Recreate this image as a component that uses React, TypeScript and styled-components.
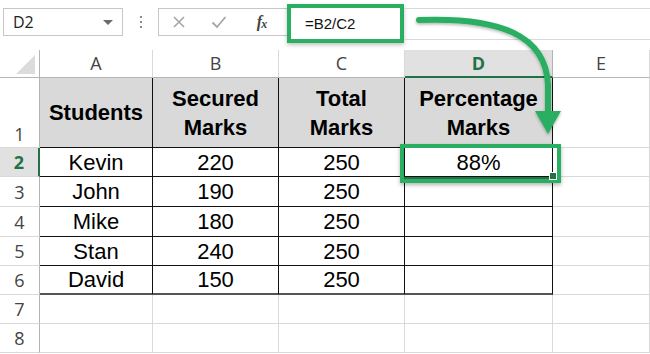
import React from "react";
import styled, { createGlobalStyle } from "styled-components";

const GREEN = "#2aae62";
const DARK_GREEN = "#217346";
const GRID = "#d9d9d9";
const HEAD_LINE = "#b4b4b4";

const GlobalStyle = createGlobalStyle`
  html, body {
    margin: 0;
    padding: 0;
    background: #ffffff;
  }
  #root {
    width: 650px;
    height: 354px;
    overflow: hidden;
  }
`;

const Page = styled.div`
  position: relative;
  width: 650px;
  height: 354px;
  background: #fff;
  font-family: "Liberation Sans", Arial, sans-serif;
`;

/* ---------- formula bar ---------- */

const Toolbar = styled.div`
  display: flex;
  align-items: flex-start;
  height: 50px;
  padding-left: 3px;
  box-sizing: border-box;
`;

const NameBox = styled.div`
  display: flex;
  align-items: center;
  justify-content: space-between;
  width: 120px;
  height: 28px;
  margin-top: 8px;
  padding: 0 9px 0 9px;
  box-sizing: border-box;
  border: 1px solid #c6c6c6;
  font-family: "Open Sans", "Noto Sans", sans-serif;
  font-size: 16px;
  color: #222;
`;

const Caret = styled.span`
  width: 0;
  height: 0;
  border-left: 5px solid transparent;
  border-right: 5px solid transparent;
  border-top: 5px solid #6a6a6a;
`;

const Dots = styled.div`
  display: flex;
  flex-direction: column;
  align-items: center;
  justify-content: center;
  gap: 3px;
  width: 35px;
  height: 28px;
  margin-top: 8px;

  span {
    width: 2px;
    height: 2px;
    background: #8a8a8a;
  }
`;

const Buttons = styled.div`
  display: flex;
  align-items: center;
  width: 129px;
  height: 28px;
  margin-top: 8px;
  box-sizing: border-box;
  border: 1px solid #c6c6c6;
  border-right: none;
`;

const ToolButton = styled.div`
  display: flex;
  align-items: center;
  justify-content: center;
  width: 40px;
  height: 100%;
`;

const Fx = styled.span`
  font-family: "Liberation Serif", "Times New Roman", serif;
  font-style: italic;
  font-weight: bold;
  font-size: 16px;
  color: #444;
  margin-left: 6px;

  sub {
    font-size: 12px;
    vertical-align: -1px;
    margin-left: -1px;
  }
`;

const FormulaCell = styled.div`
  display: flex;
  align-items: center;
  width: 117px;
  height: 39px;
  margin-top: 4px;
  padding-left: 14px;
  box-sizing: border-box;
  border: 4px solid ${GREEN};
  box-shadow: 0 2px 4px rgba(0, 0, 0, 0.25);
  font-size: 15px;
  color: #111;
  background: #fff;
`;

const FormulaRest = styled.div`
  flex: 1;
  height: 30px;
  margin-top: 8px;
  border-top: 1px solid ${GRID};
  border-bottom: 1px solid ${GRID};
`;

/* ---------- sheet ---------- */

const Sheet = styled.div`
  display: grid;
  grid-template-columns: 40px 113px 126px 126px 148px 1fr;
  grid-template-rows: 28px 70px 29px 30px 30px 29px 29px 29px 29px;
`;

type CellProps = {
  $bg?: string;
  $right?: string;
  $bottom?: string;
  $bottomWidth?: number;
  $rightWidth?: number;
  $bold?: boolean;
  $raised?: boolean;
  $valign?: "center" | "flex-end";
};

const Cell = styled.div<CellProps>`
  position: relative;
  z-index: ${(p) => (p.$raised ? 2 : "auto")};
  display: flex;
  align-items: ${(p) => p.$valign || "center"};
  justify-content: center;
  box-sizing: border-box;
  background: ${(p) => p.$bg || "#fff"};
  border-right: ${(p) => p.$rightWidth || 1}px solid ${(p) => p.$right || GRID};
  border-bottom: ${(p) => p.$bottomWidth || 1}px solid ${(p) => p.$bottom || GRID};
  font-size: 22px;
  font-weight: ${(p) => (p.$bold ? 700 : 400)};
  color: #000;
  text-align: center;
  line-height: 29px;
`;

const HeadLabel = styled.span<{ $active?: boolean }>`
  font-family: "Open Sans", "Noto Sans", sans-serif;
  font-size: 18px;
  font-weight: ${(p) => (p.$active ? 700 : 400)};
  color: ${(p) => (p.$active ? DARK_GREEN : "#444")};
`;

const RowLabel = styled(HeadLabel)`
  line-height: 26px;
`;

const Corner = styled.div`
  width: 0;
  height: 0;
  border-left: 19px solid transparent;
  border-bottom: 19px solid #dcdcdc;
  position: absolute;
  right: 4px;
  bottom: 3px;
`;

const Selection = styled.div`
  position: absolute;
  left: -5px;
  top: -4px;
  right: -9px;
  bottom: -7px;
  border: 4px solid ${GREEN};
  box-shadow: 0 2px 4px rgba(0, 0, 0, 0.3);
  pointer-events: none;

  &::before {
    content: "";
    position: absolute;
    left: 0;
    right: 3px;
    bottom: 0;
    height: 2px;
    background: ${DARK_GREEN};
  }

  &::after {
    content: "";
    position: absolute;
    right: 0;
    bottom: -1px;
    width: 6px;
    height: 6px;
    background: ${DARK_GREEN};
    border: 1px solid #fff;
  }
`;

const Arrow = styled.svg`
  position: absolute;
  left: 0;
  top: 0;
  z-index: 3;
  pointer-events: none;
`;

const columns = ["A", "B", "C", "D", "E"];

const rows: string[][] = [
  ["Kevin", "220", "250", "88%"],
  ["John", "190", "250", ""],
  ["Mike", "180", "250", ""],
  ["Stan", "240", "250", ""],
  ["David", "150", "250", ""],
];

const headers = ["Students", "Secured\nMarks", "Total\nMarks", "Percentage\nMarks"];

const Lines = ({ text }: { text: string }) => (
  <span>
    {text.split("\n").map((t, i) => (
      <React.Fragment key={i}>
        {i > 0 && <br />}
        {t}
      </React.Fragment>
    ))}
  </span>
);

export default function App() {
  const cells: React.ReactNode[] = [];

  // column header row
  cells.push(
    <Cell key="corner" $right={HEAD_LINE} $bottom={HEAD_LINE}>
      <Corner />
    </Cell>
  );
  columns.forEach((c) => {
    const active = c === "D";
    cells.push(
      <Cell
        key={`h-${c}`}
        $bg={active ? "#e1e1e1" : "#fff"}
        $right={active ? HEAD_LINE : GRID}
        $bottom={active ? DARK_GREEN : HEAD_LINE}
        $bottomWidth={active ? 2 : 1}
      >
        <HeadLabel $active={active}>{c}</HeadLabel>
      </Cell>
    );
  });

  // row 1 (table headings)
  cells.push(
    <Cell key="r1" $right={HEAD_LINE} $valign="flex-end">
      <RowLabel>1</RowLabel>
    </Cell>
  );
  headers.forEach((h, i) => {
    cells.push(
      <Cell key={`t-${i}`} $bg="#d9d9d9" $right="#111" $bottom="#111" $bold>
        <Lines text={h} />
      </Cell>
    );
  });
  cells.push(<Cell key="r1-e" />);

  // rows 2..6
  rows.forEach((r, ri) => {
    const n = ri + 2;
    const active = n === 2;
    const last = n === 6;
    cells.push(
      <Cell
        key={`rh-${n}`}
        $bg={active ? "#e1e1e1" : "#fff"}
        $right={active ? DARK_GREEN : HEAD_LINE}
        $rightWidth={active ? 2 : 1}
        $bottom={GRID}
      >
        <RowLabel $active={active}>{n}</RowLabel>
      </Cell>
    );
    r.forEach((v, ci) => {
      const selected = active && ci === 3;
      cells.push(
        <Cell
          key={`c-${n}-${ci}`}
          $right="#111"
          $bottom={last ? "#555" : "#111"}
          $bottomWidth={last ? 2 : 1}
          $raised={selected}
        >
          {v}
          {selected && <Selection />}
        </Cell>
      );
    });
    cells.push(<Cell key={`e-${n}`} />);
  });

  // rows 7..8
  [7, 8].forEach((n) => {
    cells.push(
      <Cell key={`rh-${n}`} $right={HEAD_LINE}>
        <RowLabel>{n}</RowLabel>
      </Cell>
    );
    columns.forEach((c) => cells.push(<Cell key={`x-${n}-${c}`} />));
  });

  return (
    <Page>
      <GlobalStyle />
      <Toolbar>
        <NameBox>
          D2
          <Caret />
        </NameBox>
        <Dots>
          <span />
          <span />
          <span />
        </Dots>
        <Buttons>
          <ToolButton>
            <svg width="14" height="14" viewBox="0 0 14 14">
              <path d="M2 2 L12 12 M12 2 L2 12" stroke="#a6a6a6" strokeWidth="1.6" fill="none" />
            </svg>
          </ToolButton>
          <ToolButton>
            <svg width="16" height="14" viewBox="0 0 16 14">
              <path d="M1.5 7.5 L6 12 L14.5 2" stroke="#a6a6a6" strokeWidth="1.8" fill="none" />
            </svg>
          </ToolButton>
          <ToolButton>
            <Fx>
              f<sub>x</sub>
            </Fx>
          </ToolButton>
        </Buttons>
        <FormulaCell>=B2/C2</FormulaCell>
        <FormulaRest />
      </Toolbar>

      <Sheet>{cells}</Sheet>

      <Arrow width="650" height="354" viewBox="0 0 650 354">
        <defs>
          <filter id="sh" x="-20%" y="-20%" width="140%" height="140%">
            <feDropShadow dx="0" dy="1.5" stdDeviation="1.5" floodColor="#000" floodOpacity="0.3" />
          </filter>
        </defs>
        <g filter="url(#sh)">
          <path
            d="M419 20 C 500 17, 546 35, 548 85 L 548 114"
            stroke={GREEN}
            strokeWidth="6"
            strokeLinecap="round"
            fill="none"
          />
          <path d="M535 111 L561 111 L548 134 Z" fill={GREEN} />
        </g>
      </Arrow>
    </Page>
  );
}
